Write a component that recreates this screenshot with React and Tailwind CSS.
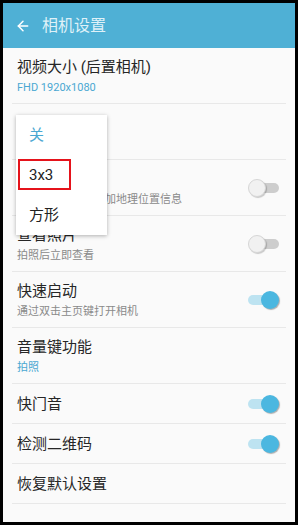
import { ArrowLeft } from "lucide-react";

const font = { fontFamily: 'Roboto, "Noto Sans CJK SC", sans-serif' };

function Toggle({ on }) {
  if (on) {
    return (
      <div className="relative w-[31px] h-[18px]">
        <div className="absolute left-0 right-[4px] top-[4px] h-[10px] rounded-full bg-[#bde3f1]" />
        <div className="absolute right-0 top-0 w-[18px] h-[18px] rounded-full bg-[#4bb7e0] shadow-[1px_1px_1px_rgba(0,0,0,0.3)]" />
      </div>
    );
  }
  return (
    <div className="relative w-[31px] h-[18px]">
      <div className="absolute left-[6px] right-0 top-[4px] h-[10px] rounded-full bg-[#cdcdcd]" />
      <div className="absolute left-0 top-0 w-[18px] h-[18px] rounded-full bg-[#f1f1f1] border border-[#d6d6d6] shadow-[1px_1px_1px_rgba(0,0,0,0.2)]" />
    </div>
  );
}

function Row({ title, sub, subBlue, toggle, tall = true }) {
  return (
    <div
      className={`mx-[9px] border-b border-[#e8e8e8] flex items-center justify-between pl-[5px] pr-[7px] ${
        tall ? "h-[56px]" : "h-[40px]"
      }`}
    >
      <div className="flex flex-col">
        <span className="text-[15px] leading-[20px] text-[#262626] min-h-[20px]">{title}</span>
        {sub !== undefined && (
          <span
            className={`text-[11px] leading-[15px] mt-[3px] min-h-[15px] ${
              subBlue ? "text-[#4aa8d2]" : "text-[#8a8a8a]"
            }`}
          >
            {sub}
          </span>
        )}
      </div>
      {toggle !== undefined && <Toggle on={toggle} />}
    </div>
  );
}

export default function App() {
  return (
    <div className="w-[298px] h-[525px] bg-black p-[3px]" style={font}>
      <div className="relative w-full h-full bg-[#fafafa] overflow-hidden">
        {/* Header */}
        <div className="h-[45px] bg-[#4fb0d5] flex items-center">
          <ArrowLeft className="ml-[12px] text-white" size={16} strokeWidth={2.25} />
          <span className="ml-[11px] text-[16px] text-[#dff1f8]">相机设置</span>
        </div>

        {/* List */}
        <Row title="视频大小 (后置相机)" sub="FHD 1920x1080" subBlue />
        <Row title="" sub="" />
        <Row title="" sub="在照片和视频中添加地理位置信息" toggle={false} />
        <Row title="查看照片" sub="拍照后立即查看" toggle={false} />
        <Row title="快速启动" sub="通过双击主页键打开相机" toggle={true} />
        <Row title="音量键功能" sub="拍照" subBlue />
        <Row title="快门音" toggle={true} tall={false} />
        <Row title="检测二维码" toggle={true} tall={false} />
        <Row title="恢复默认设置" tall={false} />

        {/* Popup menu */}
        <div className="absolute left-[13px] top-[112px] w-[91px] h-[120px] bg-white shadow-[0_1px_4px_rgba(0,0,0,0.3)] flex flex-col">
          <div className="h-[40px] flex items-center pl-[13px] text-[15px] text-[#4aa8d2]">关</div>
          <div className="h-[40px] flex items-center pl-[13px] text-[15px] text-[#222]">3x3</div>
          <div className="h-[40px] flex items-center pl-[13px] text-[15px] text-[#222]">方形</div>
          <div className="absolute left-[2px] top-[44px] w-[53px] h-[31px] border-[2px] border-[#e5131b]" />
        </div>
      </div>
    </div>
  );
}
